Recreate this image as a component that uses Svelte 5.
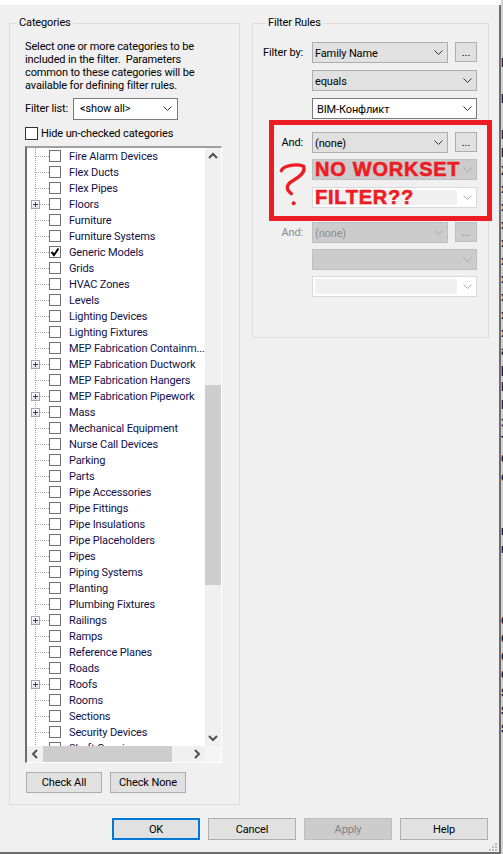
<script>
  const categories = [
    { name: "Fire Alarm Devices" },
    { name: "Flex Ducts" },
    { name: "Flex Pipes" },
    { name: "Floors", plus: true },
    { name: "Furniture" },
    { name: "Furniture Systems" },
    { name: "Generic Models", checked: true },
    { name: "Grids" },
    { name: "HVAC Zones" },
    { name: "Levels" },
    { name: "Lighting Devices" },
    { name: "Lighting Fixtures" },
    { name: "MEP Fabrication Containm..." },
    { name: "MEP Fabrication Ductwork", plus: true },
    { name: "MEP Fabrication Hangers" },
    { name: "MEP Fabrication Pipework", plus: true },
    { name: "Mass", plus: true },
    { name: "Mechanical Equipment" },
    { name: "Nurse Call Devices" },
    { name: "Parking" },
    { name: "Parts" },
    { name: "Pipe Accessories" },
    { name: "Pipe Fittings" },
    { name: "Pipe Insulations" },
    { name: "Pipe Placeholders" },
    { name: "Pipes" },
    { name: "Piping Systems" },
    { name: "Planting" },
    { name: "Plumbing Fixtures" },
    { name: "Railings", plus: true },
    { name: "Ramps" },
    { name: "Reference Planes" },
    { name: "Roads" },
    { name: "Roofs", plus: true },
    { name: "Rooms" },
    { name: "Sections" },
    { name: "Security Devices" },
    { name: "Shaft Openings" },
  ];

  const rules = [
    { label: "Filter by:", value: "Family Name", kind: "grey", dots: true, gap: "g0" },
    { value: "equals", kind: "grey", gap: "g7" },
    { value: "BIM-Конфликт", kind: "edit", gap: "g7" },
    { label: "And:", value: "(none)", kind: "grey", dots: true, gap: "g13" },
    { value: "NO WORKSET", kind: "off scrawled", gap: "g6" },
    { value: "FILTER??", kind: "blank scrawled", gap: "g7" },
    { label: "And:", value: "(none)", kind: "off", dots: true, dim: true, gap: "g14" },
    { value: "", kind: "off", gap: "g6" },
    { value: "", kind: "blank", gap: "g6" },
  ];

  // bits of the window behind the dialog, one per 18px line
  const behind = " ,,,П,,И,,Р,К,Ж,ж,ж,ж,ж,ж,ж,ж,ж,ж,а,р,К,К,З,Т,О,е,,,г,г,,,,О,О,О,О,S,S,S"
    .split(",")
    .map((s) => s.trim());
</script>

{#snippet chevron(dim)}
  <svg class="chev" class:dim width="9" height="5" viewBox="0 0 9 5">
    <polyline points="0.5,0.5 4.5,4.5 8.5,0.5" fill="none" stroke="currentColor" stroke-width="1" />
  </svg>
{/snippet}

{#snippet arrow(points)}
  <svg width="16" height="16" viewBox="0 0 16 16">
    <polyline {points} fill="none" stroke="#505050" stroke-width="2" />
  </svg>
{/snippet}

<div class="shot">
  <div class="dialog">
    <div class="groups">
      <fieldset class="categories">
        <legend>Categories</legend>
        <p class="intro">
          Select one or more categories to be<br />
          included in the filter.&nbsp; Parameters<br />
          common to these categories will be<br />
          available for defining filter rules.
        </p>

        <div class="filter-list">
          <span>Filter list:</span>
          <div class="combo">
            <span class="combo-text">&lt;show all&gt;</span>
            {@render chevron(false)}
          </div>
        </div>

        <div class="hide-row">
          <span class="hide-box"></span>
          <span>Hide un-checked categories</span>
        </div>

        <div class="tree">
          <div class="rows">
            {#each categories as c}
              <div class="row">
                <span class="gutter">
                  {#if c.plus}<span class="plus"></span>{/if}
                </span>
                <span class="box">
                  {#if c.checked}
                    <svg width="10" height="10" viewBox="0 0 10 10">
                      <polyline points="1.5,5 4,8 8.5,1.5" fill="none" stroke="#000" stroke-width="2" />
                    </svg>
                  {/if}
                </span>
                <span class="name">{c.name}</span>
              </div>
            {/each}
          </div>
          <div class="vbar">
            {@render arrow("4,10 8,6 12,10")}
            <div class="vgap"></div>
            <div class="vthumb"></div>
            <div class="fill"></div>
            {@render arrow("4,6 8,10 12,6")}
          </div>
          <div class="hbar">
            {@render arrow("10,4 6,8 10,12")}
            <div class="hthumb"></div>
            <div class="fill"></div>
            {@render arrow("6,4 10,8 6,12")}
          </div>
          <div class="corner"></div>
        </div>

        <div class="checks">
          <button>Check All</button>
          <button>Check None</button>
        </div>
      </fieldset>

      <fieldset class="filter-rules">
        <legend>Filter Rules</legend>
        {#each rules as r}
          <div class="rule {r.gap}">
            <span class="rule-label" class:dim={r.dim}>{r.label ?? ""}</span>
            <div class="field {r.kind}">
              <span class="field-text">{r.value}</span>
              {@render chevron(r.kind.includes("off") || r.kind.includes("blank"))}
            </div>
            {#if r.dots}
              <button class="dots" class:off={r.dim}>...</button>
            {/if}
          </div>
        {/each}
      </fieldset>
    </div>

    <div class="footer">
      <button class="wide default">OK</button>
      <button class="wide">Cancel</button>
      <button class="wide off">Apply</button>
      <button class="wide">Help</button>
    </div>

    <svg class="grip" width="9" height="9" viewBox="0 0 9 9" fill="#bdbdbd">
      <rect x="6" y="0" width="2" height="2" />
      <rect x="3" y="3" width="2" height="2" />
      <rect x="6" y="3" width="2" height="2" />
      <rect x="0" y="6" width="2" height="2" />
      <rect x="3" y="6" width="2" height="2" />
      <rect x="6" y="6" width="2" height="2" />
    </svg>
  </div>

  <div class="behind">
    {#each behind as letter}
      <div class="behind-line">{letter}</div>
    {/each}
  </div>

  <!-- red markup drawn on top of the screenshot -->
  <div class="redbox"></div>
  <svg class="question" width="50" height="70" viewBox="0 0 150 210">
    <path
      d="M34 62 C42 44 80 42 100 48 C108 62 92 78 72 90 C50 102 44 116 64 131"
      fill="none"
      stroke="#ed1c24"
      stroke-width="10"
      stroke-linecap="round"
    />
    <circle cx="71" cy="160" r="6" fill="#ed1c24" />
  </svg>
</div>

<style>
  :global(body) {
    margin: 0;
    background: #fff;
  }

  .shot {
    position: relative;
    display: flex;
    width: 503px;
    height: 854px;
    overflow: hidden;
    font-family: Roboto, "Noto Sans", sans-serif;
    font-size: 11px;
    letter-spacing: -0.13px;
    line-height: 13px;
    color: #000;
  }

  .dialog {
    position: relative;
    box-sizing: border-box;
    flex: none;
    width: 501px;
    height: 849px;
    margin-top: 5px;
    padding-top: 10px;
    background: #f0f0f0;
    border-right: 2px solid #6d6d6d;
    border-bottom: 2px solid #6d6d6d;
  }

  .behind {
    flex: 1;
    overflow: hidden;
    background: #d2d2d2;
  }

  .behind-line {
    height: 18px;
    line-height: 18px;
    font-size: 12px;
    font-weight: 700;
    color: #1a1a3a;
  }

  .groups {
    display: flex;
    gap: 12px;
    padding-left: 9px;
    align-items: flex-start;
  }

  fieldset {
    box-sizing: border-box;
    margin: 0;
    padding: 0;
    border: 1px solid #dcdcdc;
    min-width: 0;
  }

  legend {
    margin-left: 7px;
    padding: 0 2px;
    line-height: 16px;
  }

  .categories {
    width: 231px;
    height: 790px;
  }

  .filter-rules {
    width: 237px;
    height: 323px;
    padding: 11px 0 0 6px;
  }

  .intro {
    margin: 9px 0 0 15px;
    white-space: nowrap;
  }

  .filter-list {
    display: flex;
    align-items: center;
    margin: 6px 0 0 15px;
    height: 21px;
  }

  .filter-list > span {
    width: 48px;
    white-space: nowrap;
  }

  .combo {
    box-sizing: border-box;
    display: flex;
    align-items: center;
    justify-content: space-between;
    width: 105px;
    height: 22px;
    padding: 0 5px 0 6px;
    background: #fff;
    border: 1px solid #7a7a7a;
  }

  .chev {
    flex: none;
    color: #333;
  }

  .chev.dim {
    color: #a8a8a8;
  }

  .hide-row {
    display: flex;
    align-items: center;
    gap: 3px;
    margin: 8px 0 0 15px;
    height: 13px;
  }

  .hide-box {
    box-sizing: border-box;
    width: 13px;
    height: 13px;
    background: #fff;
    border: 1px solid #333;
  }

  .tree {
    box-sizing: border-box;
    display: grid;
    grid-template-columns: 178px 16px;
    grid-template-rows: 598px 16px;
    width: 197px;
    height: 617px;
    margin: 6px 0 0 15px;
    background: #fff;
    border-top: 2px solid #a0a0a0;
    border-left: 2px solid #6d6d6d;
    border-right: 1px solid #fff;
    border-bottom: 1px solid #fff;
  }

  .rows {
    overflow: hidden;
  }

  .row {
    display: flex;
    align-items: center;
    height: 16px;
    white-space: nowrap;
  }

  .gutter {
    box-sizing: border-box;
    display: flex;
    align-items: center;
    flex: none;
    width: 22px;
    height: 16px;
    padding-left: 4px;
    background-image:
      repeating-linear-gradient(to bottom, #a0a0a0 0 1px, transparent 1px 2px),
      repeating-linear-gradient(to right, #a0a0a0 0 1px, transparent 1px 2px);
    background-size: 1px 16px, 13px 1px;
    background-position: 8px 0, 9px 8px;
    background-repeat: no-repeat;
  }

  .plus {
    box-sizing: border-box;
    position: relative;
    width: 9px;
    height: 9px;
    background: linear-gradient(#fff, #e4e4e4);
    border: 1px solid #a6a6a6;
  }

  .plus::before,
  .plus::after {
    content: "";
    position: absolute;
    background: #2b3a8c;
  }

  .plus::before {
    left: 1px;
    right: 1px;
    top: 3px;
    height: 1px;
  }

  .plus::after {
    top: 1px;
    bottom: 1px;
    left: 3px;
    width: 1px;
  }

  .box {
    box-sizing: border-box;
    display: flex;
    align-items: center;
    justify-content: center;
    flex: none;
    width: 12px;
    height: 12px;
    background: #fff;
    border: 1px solid #707070;
  }

  .name {
    margin-left: 8px;
    color: #10104a;
  }

  .vbar,
  .hbar {
    display: flex;
    background: #f0f0f0;
  }

  .vbar {
    flex-direction: column;
  }

  .vbar svg,
  .hbar svg {
    flex: none;
  }

  .vgap {
    height: 221px;
  }

  .vthumb {
    height: 200px;
    background: #cdcdcd;
  }

  .hthumb {
    width: 129px;
    background: #cdcdcd;
  }

  .fill {
    flex: 1;
  }

  .corner {
    background: #f5f5f5;
  }

  .checks {
    display: flex;
    gap: 8px;
    margin: 9px 0 0 16px;
  }

  button {
    box-sizing: border-box;
    width: 76px;
    height: 21px;
    padding: 0;
    font: inherit;
    letter-spacing: inherit;
    color: inherit;
    background: #e1e1e1;
    border: 1px solid #adadad;
    border-radius: 0;
  }

  .rule {
    display: flex;
    width: 218px;
    height: 21px;
  }

  .g7 {
    margin-top: 7px;
  }

  .g6 {
    margin-top: 6px;
  }

  .g13 {
    margin-top: 13px;
  }

  .g14 {
    margin-top: 14px;
  }

  .rule-label {
    flex: none;
    width: 44px;
    margin-right: 9px;
    line-height: 21px;
    text-align: right;
    white-space: nowrap;
  }

  .rule-label.dim {
    color: #8c8c8c;
  }

  .field {
    box-sizing: border-box;
    display: flex;
    align-items: center;
    flex: 1;
    min-width: 0;
    padding: 0 4px 0 2px;
    border: 1px solid #adadad;
    background: #e1e1e1;
  }

  .field-text {
    flex: 1;
    padding-top: 1px;
    white-space: nowrap;
  }

  .field.edit {
    padding-left: 4px;
    background: #fff;
    border-color: #7a7a7a;
  }

  .field.off {
    color: #8c8c8c;
    background: #ccc;
    border-color: #bfbfbf;
  }

  .field.blank {
    background: #fff;
    border-color: #d9d9d9;
  }

  .field.blank .field-text {
    align-self: center;
    box-sizing: border-box;
    height: 15px;
    margin-right: 6px;
    background: #f0f0f0;
  }

  .scrawled .field-text {
    padding-top: 0;
    font-family: "Liberation Sans", Arial, sans-serif;
    font-size: 20px;
    font-weight: 700;
    line-height: 15px;
    letter-spacing: 0.75px;
    color: #ed1c24;
    -webkit-text-stroke: 0.6px #ed1c24;
  }

  .dots {
    flex: none;
    width: 22px;
    height: 20px;
    margin-left: 7px;
  }

  .dots.off,
  .wide.off {
    color: #838383;
    background: #ccc;
    border-color: #bfbfbf;
  }

  .footer {
    display: flex;
    gap: 8px;
    margin-top: 13px;
    padding-left: 112px;
  }

  .wide {
    width: 88px;
    height: 22px;
  }

  .wide.default {
    border: 2px solid #0078d7;
  }

  .grip {
    position: absolute;
    right: 1px;
    bottom: 0;
  }

  .redbox {
    position: absolute;
    left: 269px;
    top: 120px;
    box-sizing: border-box;
    width: 223px;
    height: 101px;
    border: 5px solid #ed1c24;
    pointer-events: none;
  }

  .question {
    position: absolute;
    left: 270px;
    top: 150px;
  }
</style>
